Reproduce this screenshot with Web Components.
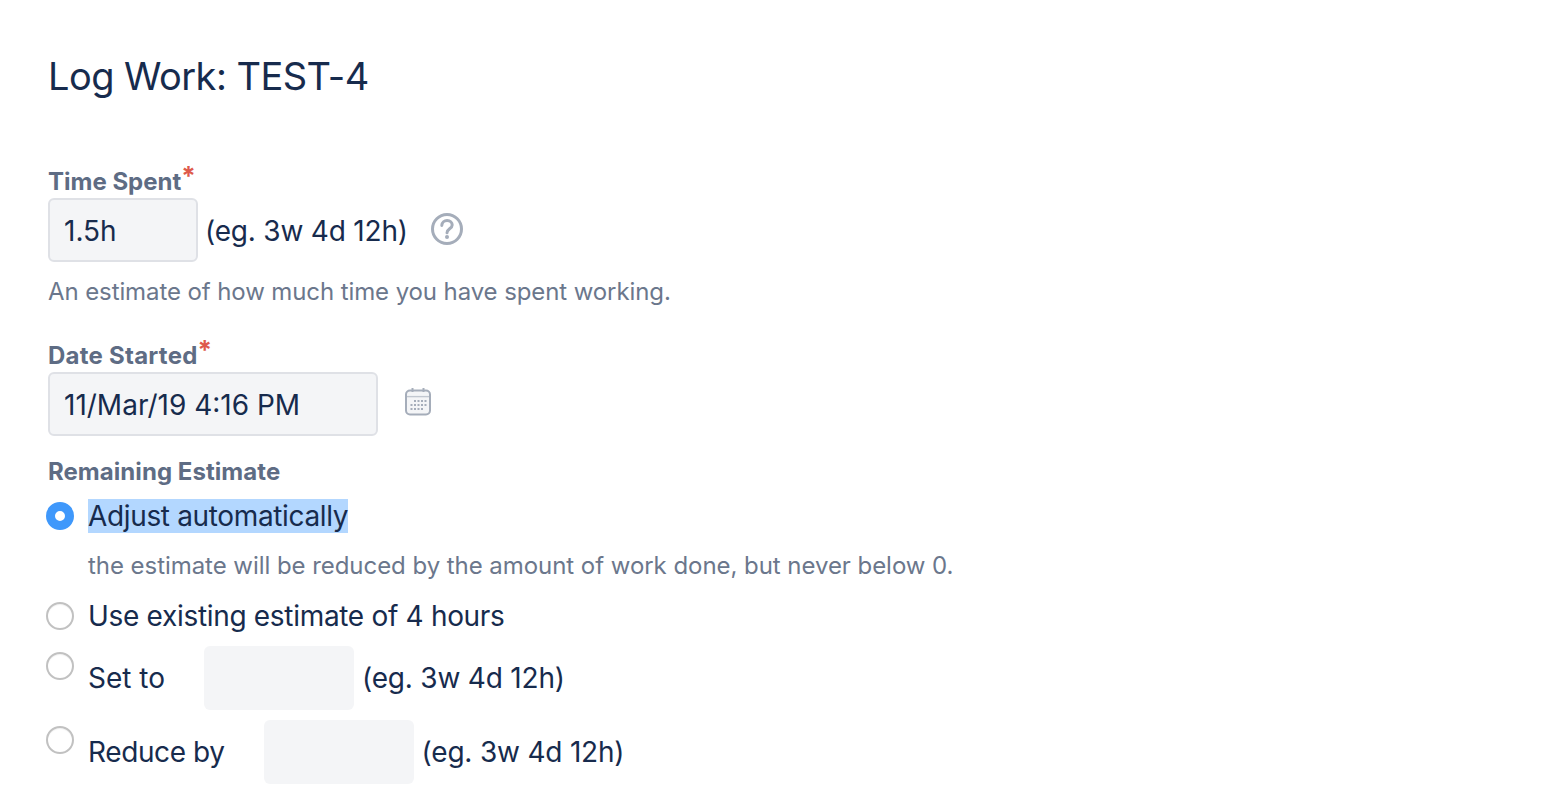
<!DOCTYPE html>
<html>
<head>
<meta charset="utf-8">
<title>Log Work</title>
<style>
  html, body { margin: 0; background: #fff; }
  body { font-family: Inter, "Noto Sans", sans-serif; color: #172b4d; overflow: hidden; }
  .eg { letter-spacing: -0.2px; margin: 2px 0 0 -1px; }
</style>
</head>
<body>
<log-work-form>
  <span slot="title">Log Work: TEST-4</span>

  <form-label required>Time Spent</form-label>
  <form-row>
    <text-box width="150" value="1.5h"></text-box>
    <span class="eg">(eg. 3w 4d 12h)</span>
    <help-icon></help-icon>
  </form-row>
  <form-hint>An estimate of how much time you have spent working.</form-hint>

  <form-label required style="margin-top:31px;letter-spacing:.25px">Date Started</form-label>
  <form-row>
    <text-box width="330" value="11/Mar/19 4:16 PM"></text-box>
    <calendar-icon></calendar-icon>
  </form-row>

  <form-label style="margin-top:19px;letter-spacing:.05px">Remaining Estimate</form-label>
  <radio-row checked selected style="margin-top:11px;letter-spacing:-.35px">Adjust automatically</radio-row>
  <form-hint style="margin:17px 0 0 40px;letter-spacing:-.05px">the estimate will be reduced by the amount of work done, but never below 0.</form-hint>
  <radio-row style="margin-top:17px;letter-spacing:-.31px">Use existing estimate of 4 hours</radio-row>
  <radio-row input style="margin-top:13px">Set to</radio-row>
  <radio-row input style="margin-top:10px;letter-spacing:-.4px">Reduce by</radio-row>
</log-work-form>

<script>
const formTemplate = document.createElement('template');
formTemplate.innerHTML = `
  <style>
    :host { display: block; padding: 53px 0 0 48px; font-size: 28px; line-height: 34px; }
    h1 { margin: 0 0 66px; font-size: 38px; line-height: 46px; font-weight: 400; letter-spacing: -0.55px; }
  </style>
  <h1><slot name="title"></slot></h1>
  <slot></slot>
`;
class LogWorkForm extends HTMLElement {
  constructor() {
    super();
    this.attachShadow({mode: 'open'}).appendChild(formTemplate.content.cloneNode(true));
  }
}
customElements.define('log-work-form', LogWorkForm);

const labelTemplate = document.createElement('template');
labelTemplate.innerHTML = `
  <style>
    :host { display: block; font-size: 24px; line-height: 33px; font-weight: 700; color: #5e6c84; }
    i { font-style: normal; font-weight: 700; color: #de5a4c; font-size: 26px; line-height: 0; position: relative; top: -5px; }
  </style>
  <slot></slot><i></i>
`;
class FormLabel extends HTMLElement {
  constructor() {
    super();
    this.attachShadow({mode: 'open'}).appendChild(labelTemplate.content.cloneNode(true));
    if (this.hasAttribute('required')) this.shadowRoot.querySelector('i').textContent = '*';
  }
}
customElements.define('form-label', FormLabel);

const rowTemplate = document.createElement('template');
rowTemplate.innerHTML = `
  <style>
    :host { display: flex; align-items: center; gap: 8px; }
  </style>
  <slot></slot>
`;
class FormRow extends HTMLElement {
  constructor() {
    super();
    this.attachShadow({mode: 'open'}).appendChild(rowTemplate.content.cloneNode(true));
  }
}
customElements.define('form-row', FormRow);

const hintTemplate = document.createElement('template');
hintTemplate.innerHTML = `
  <style>
    :host { display: block; margin-top: 14px; font-size: 24px; line-height: 32px; color: #6b778c; letter-spacing: -0.1px; }
  </style>
  <slot></slot>
`;
class FormHint extends HTMLElement {
  constructor() {
    super();
    this.attachShadow({mode: 'open'}).appendChild(hintTemplate.content.cloneNode(true));
  }
}
customElements.define('form-hint', FormHint);

const boxTemplate = document.createElement('template');
boxTemplate.innerHTML = `
  <style>
    :host { display: block; flex: none; box-sizing: border-box; height: 64px; padding: 0 14px; background: #f4f5f7; border: 2px solid #dfe1e6; border-radius: 6px; font-size: 28px; line-height: 62px; color: #172b4d; white-space: nowrap; }
  </style>
  <span></span>
`;
class TextBox extends HTMLElement {
  constructor() {
    super();
    this.attachShadow({mode: 'open'}).appendChild(boxTemplate.content.cloneNode(true));
    this.shadowRoot.querySelector('span').textContent = this.getAttribute('value') || '';
    this.style.width = this.getAttribute('width') + 'px';
  }
}
customElements.define('text-box', TextBox);

const helpTemplate = document.createElement('template');
helpTemplate.innerHTML = `
  <style>
    :host { display: block; flex: none; width: 34px; height: 34px; margin: -2px 0 0 14px; }
    svg { display: block; }
  </style>
  <svg width="34" height="34" viewBox="0 0 34 34" fill="none" stroke="#a5adba">
    <circle cx="17" cy="17" r="14.5" stroke-width="3"/>
    <path d="M11.8 13.4c.2-3 2.5-4.9 5.3-4.9 3 0 5.1 1.9 5.1 4.4 0 3.9-5.2 3.9-5.2 7.8" stroke-width="3" stroke-linecap="round"/>
    <circle cx="17" cy="25" r="2" fill="#a5adba" stroke="none"/>
  </svg>
`;
class HelpIcon extends HTMLElement {
  constructor() {
    super();
    this.attachShadow({mode: 'open'}).appendChild(helpTemplate.content.cloneNode(true));
  }
}
customElements.define('help-icon', HelpIcon);

const calendarTemplate = document.createElement('template');
calendarTemplate.innerHTML = `
  <style>
    :host { display: block; flex: none; width: 28px; height: 30px; margin: -5px 0 0 18px; }
    svg { display: block; }
  </style>
  <svg width="28" height="30" viewBox="0 0 28 30">
    <rect x="2" y="3.5" width="24" height="24" rx="4" fill="#f4f5f7" stroke="#a5adba" stroke-width="2"/>
    <path d="M3 9.6h22" stroke="#c1c7d0" stroke-width="1.4"/>
    <rect x="7.5" y="1" width="2" height="4" fill="#a5adba"/>
    <rect x="18.5" y="1" width="2" height="4" fill="#a5adba"/>
    <g fill="#a5adba">
      <rect x="10" y="13" width="2" height="2"/><rect x="13.5" y="13" width="2" height="2"/><rect x="17" y="13" width="2" height="2"/><rect x="20.5" y="13" width="2" height="2"/>
      <rect x="6.5" y="17" width="2" height="2"/><rect x="10" y="17" width="2" height="2"/><rect x="13.5" y="17" width="2" height="2"/><rect x="17" y="17" width="2" height="2"/><rect x="20.5" y="17" width="2" height="2"/>
      <rect x="6.5" y="21" width="2" height="2"/><rect x="10" y="21" width="2" height="2"/><rect x="13.5" y="21" width="2" height="2"/><rect x="17" y="21" width="2" height="2"/>
    </g>
  </svg>
`;
class CalendarIcon extends HTMLElement {
  constructor() {
    super();
    this.attachShadow({mode: 'open'}).appendChild(calendarTemplate.content.cloneNode(true));
  }
}
customElements.define('calendar-icon', CalendarIcon);

const radioTemplate = document.createElement('template');
radioTemplate.innerHTML = `
  <style>
    :host { display: flex; align-items: center; margin-left: -2px; min-height: 34px; }
    .dot { flex: none; box-sizing: border-box; width: 28px; height: 28px; margin-right: 14px; border-radius: 50%; background: #fff; border: 2px solid #c1c1c1; box-shadow: inset 0 1px 1px rgba(0,0,0,.06); }
    :host([checked]) .dot { border: 9px solid #3f98fb; box-shadow: none; }
    :host([selected]) .text { background: #b3d7ff; }
    :host([input]) { align-items: flex-start; }
    :host([input]) .dot { margin-top: 6px; }
    :host([input]) .text { margin-top: 15px; }
    .extra { display: none; margin-left: 39px; align-items: center; gap: 7px; letter-spacing: -0.2px; }
    :host([input]) .extra { display: flex; }
    .blank { width: 150px; height: 64px; margin-right: 1px; background: #f4f5f7; border-radius: 6px; }
  </style>
  <span class="dot"></span>
  <span class="text"><slot></slot></span>
  <span class="extra"><span class="blank"></span><span>(eg. 3w 4d 12h)</span></span>
`;
class RadioRow extends HTMLElement {
  constructor() {
    super();
    this.attachShadow({mode: 'open'}).appendChild(radioTemplate.content.cloneNode(true));
  }
}
customElements.define('radio-row', RadioRow);
</script>
</body>
</html>
